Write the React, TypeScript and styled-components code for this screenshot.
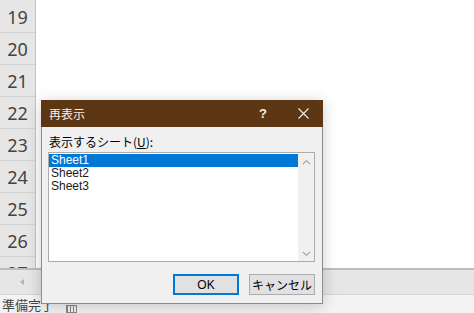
import React from 'react';
import styled, { createGlobalStyle } from 'styled-components';

const GlobalStyle = createGlobalStyle`
  html, body {
    margin: 0;
    padding: 0;
    background: #ffffff;
    overflow: hidden;
  }
  body {
    font-family: "Liberation Sans", "Noto Sans CJK JP", sans-serif;
  }
`;

const rows = [19, 20, 21, 22, 23, 24, 25, 26, 27];
const sheets = ['Sheet1', 'Sheet2', 'Sheet3'];

const Page = styled.div`
  position: relative;
  width: 474px;
  height: 313px;
  display: flex;
  flex-direction: column;
  overflow: hidden;
`;

const SheetArea = styled.div`
  flex: 0 0 268px;
  display: flex;
  overflow: hidden;
`;

const RowHeaders = styled.div`
  width: 35px;
  padding-top: 1px;
  background: #e6e6e6;
  border-right: 1px solid #c4c4c4;
  display: flex;
  flex-direction: column;
`;

const RowHeader = styled.div`
  flex: 0 0 32px;
  box-sizing: border-box;
  border-bottom: 1px solid #d2d2d2;
  display: flex;
  align-items: center;
  justify-content: center;
  font-family: "Noto Sans", "Liberation Sans", sans-serif;
  font-size: 18px;
  color: #444444;
`;

const Cells = styled.div`
  flex: 1;
  background: #ffffff;
`;

const ScrollBand = styled.div`
  flex: 0 0 24px;
  background: #e6e6e6;
  border-top: 2px solid #bdbdbd;
  border-bottom: 1px solid #d6d6d6;
  display: flex;
  align-items: center;
  padding-left: 20px;
`;

const LeftArrow = styled.div`
  width: 0;
  height: 0;
  border-top: 3px solid transparent;
  border-bottom: 3px solid transparent;
  border-right: 4px solid #b4b4b4;
`;

const StatusBar = styled.div`
  flex: 1;
  background: #f3f3f3;
  display: flex;
  align-items: center;
  padding-left: 2px;
  gap: 12px;
  font-family: "Noto Sans CJK JP", sans-serif;
  font-size: 13px;
  color: #444444;
`;

const MacroIcon = styled.div`
  width: 9px;
  height: 6px;
  margin-top: 8px;
  border: 1px solid #8a8a8a;
  background: repeating-linear-gradient(90deg, #8a8a8a 0 1px, transparent 1px 3px);
`;

const Dialog = styled.div`
  position: absolute;
  left: 41px;
  top: 100px;
  width: 282px;
  height: 204px;
  box-sizing: border-box;
  background: #f0f0f0;
  border: 1px solid #8c8c8c;
  border-top: none;
  box-shadow: 0 2px 14px rgba(0, 0, 0, 0.2);
  display: flex;
  flex-direction: column;
`;

const TitleBar = styled.div`
  height: 27px;
  margin: 0 -1px;
  background: #5d3613;
  display: flex;
  align-items: center;
  padding-left: 8px;
  color: #f6efe8;
  font-family: "Noto Sans CJK JP", sans-serif;
  font-size: 12px;
`;

const TitleText = styled.div`
  flex: 1;
`;

const TitleButton = styled.div`
  width: 40px;
  height: 27px;
  display: flex;
  align-items: center;
  justify-content: center;
  font-family: "Liberation Sans", sans-serif;
  font-size: 13px;
  font-weight: bold;
`;

const Body = styled.div`
  flex: 1;
  display: flex;
  flex-direction: column;
  padding: 8px 7px 0 6px;
`;

const Label = styled.div`
  height: 14px;
  line-height: 14px;
  padding-left: 1px;
  font-family: "Noto Sans CJK JP", sans-serif;
  font-size: 12px;
  color: #000000;

  u {
    text-decoration: underline;
    text-underline-offset: 1px;
  }
`;

const ListBox = styled.div`
  margin-top: 3px;
  height: 110px;
  box-sizing: border-box;
  border: 1px solid #acacac;
  background: #ffffff;
  display: flex;
`;

const Items = styled.div`
  flex: 1;
  padding-top: 1px;
`;

const Item = styled.div<{ selected?: boolean }>`
  height: 13px;
  line-height: 13px;
  padding-left: 2px;
  font-size: 12px;
  color: ${({ selected }) => (selected ? '#ffffff' : '#1a1a1a')};
  background: ${({ selected }) => (selected ? '#0078d7' : 'transparent')};
`;

const ScrollTrack = styled.div`
  width: 16px;
  background: #f0f0f0;
  display: flex;
  flex-direction: column;
  justify-content: space-between;
  align-items: center;
  padding: 6px 0 4px;
`;

const Buttons = styled.div`
  margin-top: 12px;
  display: flex;
  justify-content: flex-end;
  gap: 10px;
`;

const Button = styled.div<{ primary?: boolean }>`
  width: 66px;
  height: 21px;
  box-sizing: border-box;
  background: #e1e1e1;
  border: ${({ primary }) => (primary ? '2px solid #0078d7' : '1px solid #adadad')};
  display: flex;
  align-items: center;
  justify-content: center;
  font-family: "Liberation Sans", "Noto Sans CJK JP", sans-serif;
  font-size: 12px;
  color: #000000;
`;

const Chevron = ({ up }: { up?: boolean }) => (
  <svg width="9" height="6" viewBox="0 0 9 6">
    <path
      d={up ? 'M1 5 L4.5 1.5 L8 5' : 'M1 1 L4.5 4.5 L8 1'}
      fill="none"
      stroke="#a6a6a6"
      strokeWidth="1.2"
    />
  </svg>
);

const CloseIcon = () => (
  <svg width="11" height="11" viewBox="0 0 11 11">
    <path d="M0.5 0.5 L10.5 10.5 M10.5 0.5 L0.5 10.5" stroke="#f6efe8" strokeWidth="1.1" />
  </svg>
);

const App: React.FC = () => {
  return (
    <Page>
      <GlobalStyle />
      <SheetArea>
        <RowHeaders>
          {rows.map(r => (
            <RowHeader key={r}>{r}</RowHeader>
          ))}
        </RowHeaders>
        <Cells />
      </SheetArea>
      <ScrollBand>
        <LeftArrow />
      </ScrollBand>
      <StatusBar>
        <span>準備完了</span>
        <MacroIcon />
      </StatusBar>

      <Dialog>
        <TitleBar>
          <TitleText>再表示</TitleText>
          <TitleButton>?</TitleButton>
          <TitleButton>
            <CloseIcon />
          </TitleButton>
        </TitleBar>
        <Body>
          <Label>
            表示するシート(<u>U</u>):
          </Label>
          <ListBox>
            <Items>
              {sheets.map((s, i) => (
                <Item key={s} selected={i === 0}>
                  {s}
                </Item>
              ))}
            </Items>
            <ScrollTrack>
              <Chevron up />
              <Chevron />
            </ScrollTrack>
          </ListBox>
          <Buttons>
            <Button primary>OK</Button>
            <Button>キャンセル</Button>
          </Buttons>
        </Body>
      </Dialog>
    </Page>
  );
};

export default App;
